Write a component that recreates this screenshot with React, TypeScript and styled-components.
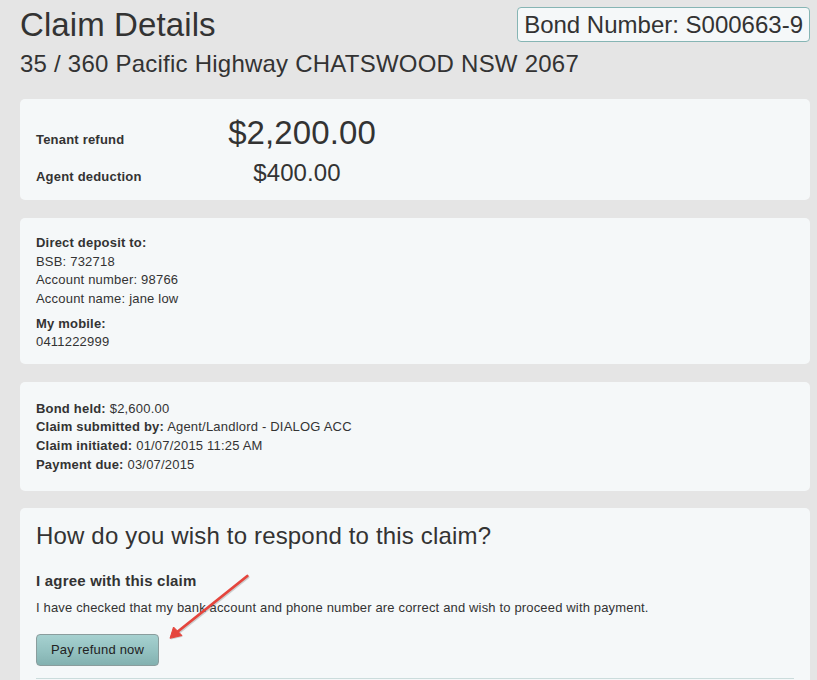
import React from "react";
import styled, { createGlobalStyle } from "styled-components";

const GlobalStyle = createGlobalStyle`
  html, body {
    margin: 0;
    padding: 0;
    background: #e5e5e5;
  }
  body {
    font-family: "Liberation Sans", Arial, Helvetica, sans-serif;
    color: #333333;
    font-size: 13px;
    line-height: 18.57px;
    letter-spacing: 0.2px;
  }
  * { box-sizing: border-box; }
`;

const Page = styled.div`
  position: relative;
  width: 817px;
  height: 680px;
  overflow: hidden;
  padding: 0 7px 0 20px;
`;

const Header = styled.div`
  display: flex;
  justify-content: space-between;
  align-items: flex-start;
  padding-top: 7px;
`;

const Title = styled.h1`
  margin: 0;
  font-size: 33px;
  font-weight: normal;
  line-height: 36px;
  letter-spacing: 0.1px;
  color: #333;
`;

const BondBox = styled.div`
  font-size: 24px;
  line-height: 27px;
  letter-spacing: 0;
  padding: 3px 6px 3px 6px;
  border: 1px solid #86b5b4;
  border-radius: 4px;
  background: #f5f8f9;
  color: #333;
`;

const Address = styled.h2`
  margin: 8px 0 0 0;
  font-size: 24px;
  font-weight: normal;
  line-height: 26px;
  letter-spacing: 0.23px;
  color: #333;
`;

const Card = styled.div<{ $pt: number; $pb: number; $mt: number }>`
  margin-top: ${(p) => p.$mt}px;
  background: #f5f8f9;
  border-radius: 5px;
  padding: ${(p) => p.$pt}px 16px ${(p) => p.$pb}px 16px;
`;

const AmountRow = styled.div<{ $mt?: number }>`
  display: flex;
  align-items: baseline;
  margin-top: ${(p) => p.$mt || 0}px;
`;

const AmountLabel = styled.div`
  width: 166px;
  font-weight: bold;
  font-size: 13px;
  line-height: 18.57px;
`;

const Amount = styled.div<{ $size: number; $lh: number; $shift?: number }>`
  width: 200px;
  text-align: center;
  font-size: ${(p) => p.$size}px;
  line-height: ${(p) => p.$lh}px;
  letter-spacing: 0.1px;
  padding-right: ${(p) => p.$shift || 0}px;
  color: #333;
`;

const Group = styled.div<{ $mt?: number }>`
  margin-top: ${(p) => p.$mt || 0}px;
`;

const Line = styled.div`
  font-size: 13px;
  line-height: 18.57px;
`;

const Bold = styled.span`
  font-weight: bold;
`;

const RespondTitle = styled.h3`
  margin: 0;
  font-size: 24px;
  font-weight: normal;
  line-height: 26.4px;
  letter-spacing: 0.17px;
  color: #333;
`;

const AgreeTitle = styled.h4`
  margin: 24px 0 0 0;
  font-size: 15px;
  font-weight: bold;
  line-height: 16.5px;
  color: #333;
`;

const Description = styled.p`
  margin: 9px 0 0 0;
  font-size: 13px;
  line-height: 18.57px;
  letter-spacing: 0.16px;
`;

const PayButton = styled.button`
  margin-top: 17px;
  font-family: "Liberation Sans", Arial, sans-serif;
  font-size: 13px;
  line-height: 18.57px;
  letter-spacing: 0.2px;
  color: #222;
  padding: 5.5px 14px;
  border: 1px solid #8a9d9d;
  border-radius: 4px;
  background: linear-gradient(to bottom, #a6d1d0 0%, #93c1c0 55%, #83b1b0 100%);
  cursor: pointer;
`;

const Rule = styled.hr`
  margin: 12px 0 0 0;
  border: 0;
  border-top: 1px solid #cbdcdc;
`;

const ArrowOverlay = styled.svg`
  position: absolute;
  left: 160px;
  top: 565px;
  width: 100px;
  height: 85px;
  pointer-events: none;
`;

export default function App() {
  return (
    <>
      <GlobalStyle />
      <Page>
        <Header>
          <Title>Claim Details</Title>
          <BondBox>Bond Number: S000663-9</BondBox>
        </Header>
        <Address>35 / 360 Pacific Highway CHATSWOOD NSW 2067</Address>

        <Card $mt={22} $pt={14} $pb={12}>
          <AmountRow>
            <AmountLabel>Tenant refund</AmountLabel>
            <Amount $size={33} $lh={40}>$2,200.00</Amount>
          </AmountRow>
          <AmountRow $mt={5}>
            <AmountLabel>Agent deduction</AmountLabel>
            <Amount $size={24} $lh={30} $shift={10}>$400.00</Amount>
          </AmountRow>
        </Card>

        <Card $mt={18} $pt={16} $pb={12}>
          <Group>
            <Line><Bold>Direct deposit to:</Bold></Line>
            <Line>BSB: 732718</Line>
            <Line>Account number: 98766</Line>
            <Line>Account name: jane low</Line>
          </Group>
          <Group $mt={6.5}>
            <Line><Bold>My mobile:</Bold></Line>
            <Line>0411222999</Line>
          </Group>
        </Card>

        <Card $mt={18} $pt={18} $pb={17}>
          <Line><Bold>Bond held:</Bold> $2,600.00</Line>
          <Line><Bold>Claim submitted by:</Bold> Agent/Landlord - DIALOG ACC</Line>
          <Line><Bold>Claim initiated:</Bold> 01/07/2015 11:25 AM</Line>
          <Line><Bold>Payment due:</Bold> 03/07/2015</Line>
        </Card>

        <Card $mt={17} $pt={14.5} $pb={20}>
          <RespondTitle>How do you wish to respond to this claim?</RespondTitle>
          <AgreeTitle>I agree with this claim</AgreeTitle>
          <Description>
            I have checked that my bank account and phone number are correct and wish to proceed with payment.
          </Description>
          <PayButton>Pay refund now</PayButton>
          <Rule />
        </Card>

        <ArrowOverlay viewBox="0 0 100 85">
          <g transform="translate(0.8,1.2)" opacity="0.25">
            <line x1="87.3" y1="11" x2="16" y2="68" stroke="#555" strokeWidth="2.8" strokeLinecap="round" />
            <polygon points="10,73.3 13.5,62 22,70.5" fill="#555" />
          </g>
          <line x1="87.3" y1="11" x2="16" y2="68" stroke="#e5453d" strokeWidth="2.8" strokeLinecap="round" />
          <polygon points="10,73.3 13.5,62 22,70.5" fill="#e5453d" stroke="#e5453d" strokeWidth="1" strokeLinejoin="round" />
        </ArrowOverlay>
      </Page>
    </>
  );
}
